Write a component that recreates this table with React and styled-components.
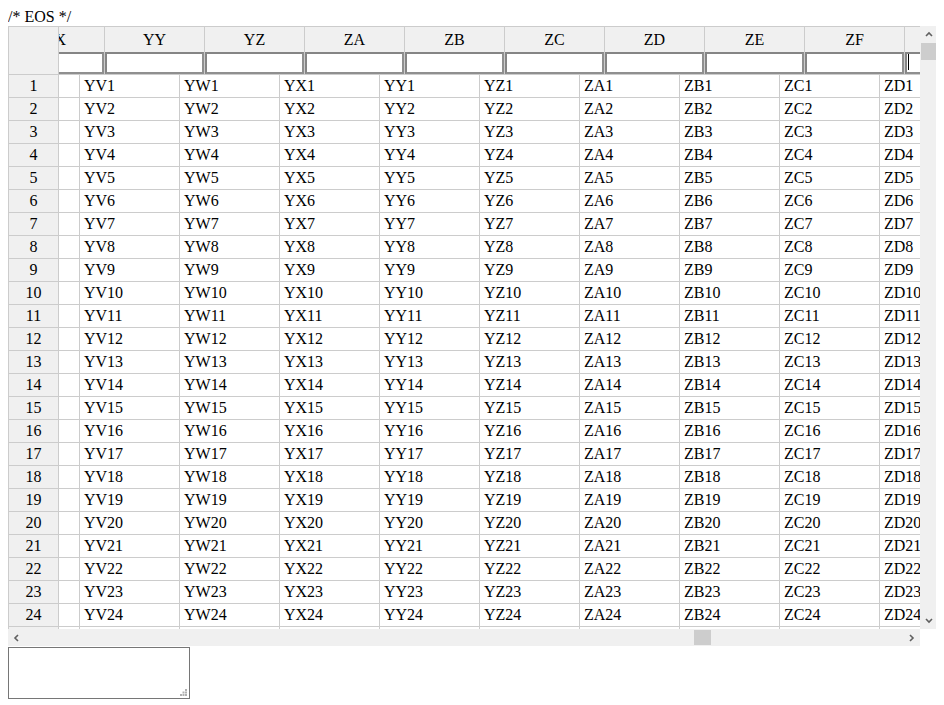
import React from "react";
import styled, { createGlobalStyle } from "styled-components";

const GlobalStyle = createGlobalStyle`
  body {
    margin: 8px;
    font-family: "Liberation Serif", "Times New Roman", serif;
    font-size: 16px;
    color: #000;
    background: #fff;
  }
`;

const Caption = styled.div`
  height: 18px;
  line-height: 18px;
`;

const GridFrame = styled.div`
  display: grid;
  grid-template-columns: 912px 17px;
  grid-template-rows: 603px 17px;
  width: 929px;
`;

const Viewport = styled.div`
  display: flex;
  flex-direction: column;
  overflow: hidden;
  border-top: 1px solid #ccc;
  box-sizing: border-box;
`;

const HeadBlock = styled.div`
  display: flex;
  flex: none;
`;

const Corner = styled.div`
  flex: none;
  width: 51px;
  height: 48px;
  box-sizing: border-box;
  background: #f0f0f0;
  border-left: 1px solid #ccc;
  border-right: 1px solid #ccc;
  border-bottom: 1px solid #ccc;
`;

const Clip = styled.div`
  flex: 1;
  min-width: 0;
  overflow: hidden;
`;

const Strip = styled.div`
  display: flex;
  flex-direction: column;
  width: max-content;
  margin-left: ${(p) => p.$shift}px;
`;

const LabelRow = styled.div`
  display: flex;
  height: 25px;
  background: #f0f0f0;
`;

const LabelCell = styled.div`
  flex: none;
  width: 100px;
  box-sizing: border-box;
  border-right: 1px solid #ccc;
  text-align: center;
  line-height: 25px;
  white-space: nowrap;
  overflow: hidden;
`;

const FilterRow = styled.div`
  display: flex;
  height: 23px;
  box-sizing: border-box;
  background: #f0f0f0;
  border-bottom: 1px solid #ccc;
`;

const FilterCell = styled.div`
  flex: none;
  width: 100px;
  height: 22px;
  box-sizing: border-box;
  border-right: 1px solid #ccc;
`;

const FilterInput = styled.input`
  display: block;
  width: 100%;
  height: 22px;
  margin: 0;
  padding: 0 1px;
  box-sizing: border-box;
  border: 2px solid #858585;
  border-bottom-color: #8f8f8f;
  border-right-color: #8f8f8f;
  outline: none;
  background: ${(p) =>
    p.$caret ? "#fff linear-gradient(#000, #000) no-repeat 1px 0 / 1px 16px" : "#fff"};
  font: inherit;
`;

const Body = styled.div`
  display: flex;
  flex: 1;
  min-height: 0;
`;

const NumColumn = styled.div`
  flex: none;
  display: flex;
  flex-direction: column;
  width: 51px;
`;

const NumCell = styled.div`
  flex: none;
  height: 23px;
  box-sizing: border-box;
  background: #f0f0f0;
  border-left: 1px solid #ccc;
  border-right: 1px solid #ccc;
  border-bottom: 1px solid #ccc;
  text-align: center;
  line-height: 22px;
`;

const DataRow = styled.div`
  display: flex;
  height: 23px;
  box-sizing: border-box;
  border-bottom: 1px solid #ccc;
`;

const DataCell = styled.div`
  flex: none;
  width: 100px;
  box-sizing: border-box;
  padding: 0 4px;
  border-right: 1px solid #ccc;
  line-height: 22px;
  white-space: nowrap;
  overflow: hidden;
`;

const VBar = styled.div`
  display: flex;
  flex-direction: column;
  background: #f0f0f0;
`;

const HBar = styled.div`
  display: flex;
  background: #f0f0f0;
`;

const BarButton = styled.div`
  flex: none;
  width: 17px;
  height: 17px;
  display: flex;
  align-items: center;
  justify-content: center;
`;

const Track = styled.div`
  flex: 1;
  display: flex;
  flex-direction: ${(p) => (p.$vertical ? "column" : "row")};
`;

const Thumb = styled.div`
  flex: none;
  background: #cdcdcd;
  ${(p) =>
    p.$vertical
      ? `width: 15px; height: 17px; margin: ${p.$offset}px 0 0 1px;`
      : `width: 17px; height: 15px; margin: 1px 0 0 ${p.$offset}px;`}
`;

const BarCorner = styled.div`
  background: #fff;
`;

const NoteWrap = styled.div`
  position: relative;
  width: 182px;
  height: 52px;
  margin-top: 1px;
`;

const Note = styled.textarea`
  display: block;
  width: 100%;
  height: 100%;
  margin: 0;
  box-sizing: border-box;
  border: 1px solid #767676;
  resize: none;
  outline: none;
`;

const Grip = styled.svg`
  position: absolute;
  right: 3px;
  bottom: 3px;
`;

const Chevron = ({ dir }) => {
  const pts = {
    up: "1,5 4,2 7,5",
    down: "1,2 4,5 7,2",
    left: "5,1 2,4 5,7",
    right: "2,1 5,4 2,7",
  }[dir];
  return (
    <svg width="8" height="8" viewBox="0 0 8 8">
      <polyline points={pts} fill="none" stroke="#606060" strokeWidth="1.6" />
    </svg>
  );
};

const headCols = ["YX", "YY", "YZ", "ZA", "ZB", "ZC", "ZD", "ZE", "ZF", "ZG"];
const bodyCols = ["YU", "YV", "YW", "YX", "YY", "YZ", "ZA", "ZB", "ZC", "ZD"];
const rows = Array.from({ length: 25 }, (_, i) => i + 1);

// horizontal scroll position of the sheet, the thumb follows it
const scrollFraction = 0.777;

const App = () => {
  const trackLen = 912 - 34 - 17;
  const hThumb = Math.round(scrollFraction * trackLen);
  return (
    <>
      <GlobalStyle />
      <Caption>/* EOS */</Caption>
      <GridFrame>
        <Viewport>
          <HeadBlock>
            <Corner />
            <Clip>
              <Strip $shift={-54}>
                <LabelRow>
                  {headCols.map((c) => (
                    <LabelCell key={c}>{c}</LabelCell>
                  ))}
                </LabelRow>
                <FilterRow>
                  {headCols.map((c, i) => (
                    <FilterCell key={c}>
                      <FilterInput readOnly $caret={i === headCols.length - 1} />
                    </FilterCell>
                  ))}
                </FilterRow>
              </Strip>
            </Clip>
          </HeadBlock>
          <Body>
            <NumColumn>
              {rows.map((r) => (
                <NumCell key={r}>{r}</NumCell>
              ))}
            </NumColumn>
            <Clip>
              <Strip $shift={-79}>
                {rows.map((r) => (
                  <DataRow key={r}>
                    {bodyCols.map((c) => (
                      <DataCell key={c}>{c + r}</DataCell>
                    ))}
                  </DataRow>
                ))}
              </Strip>
            </Clip>
          </Body>
        </Viewport>
        <VBar>
          <BarButton>
            <Chevron dir="up" />
          </BarButton>
          <Track $vertical>
            <Thumb $vertical $offset={0} />
          </Track>
          <BarButton>
            <Chevron dir="down" />
          </BarButton>
        </VBar>
        <HBar>
          <BarButton>
            <Chevron dir="left" />
          </BarButton>
          <Track>
            <Thumb $offset={hThumb} />
          </Track>
          <BarButton>
            <Chevron dir="right" />
          </BarButton>
        </HBar>
        <BarCorner />
      </GridFrame>
      <NoteWrap>
        <Note />
        <Grip width="7" height="7" viewBox="0 0 7 7">
          <rect x="5" y="0" width="2" height="2" fill="#b0b0b0" />
          <rect x="2.5" y="2.5" width="2" height="2" fill="#b0b0b0" />
          <rect x="5" y="2.5" width="2" height="2" fill="#b0b0b0" />
          <rect x="0" y="5" width="2" height="2" fill="#b0b0b0" />
          <rect x="2.5" y="5" width="2" height="2" fill="#b0b0b0" />
          <rect x="5" y="5" width="2" height="2" fill="#b0b0b0" />
        </Grip>
      </NoteWrap>
    </>
  );
};

export default App;
